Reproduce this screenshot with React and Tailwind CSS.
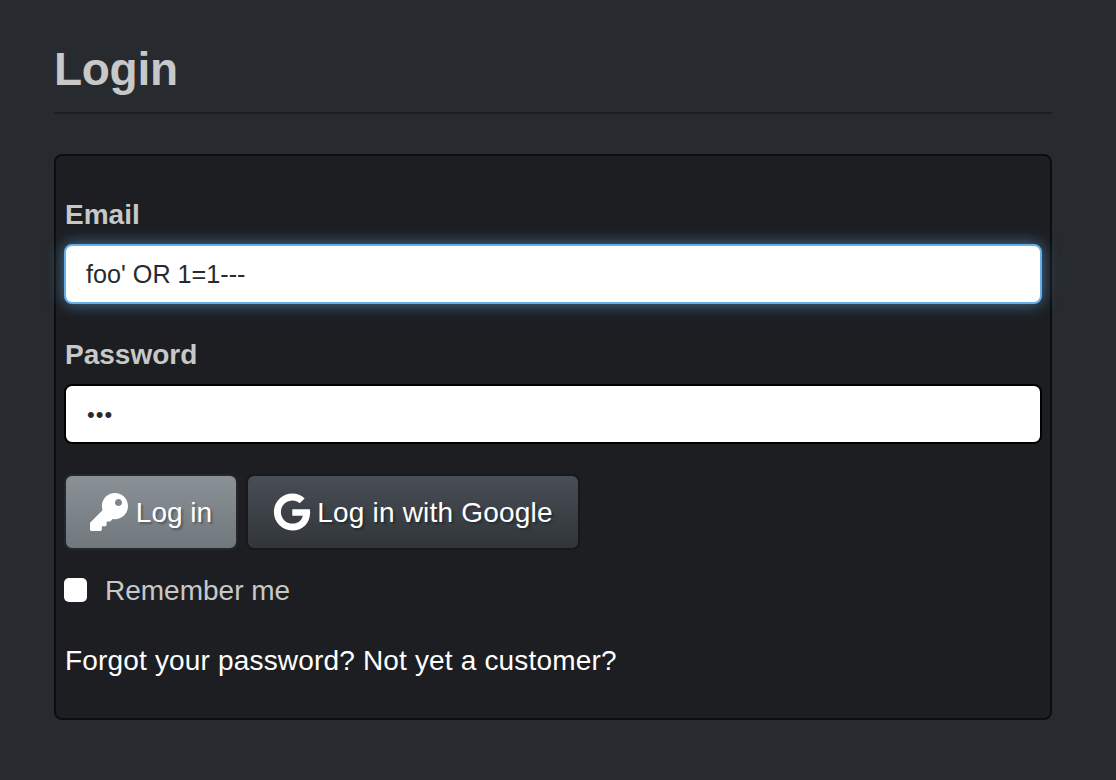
import React from "react";
import { FaKey, FaGoogle } from "react-icons/fa";

export default function App() {
  return (
    <div className="w-[1116px] h-[780px] overflow-hidden bg-[#272b30] px-[54px] pt-[40px] font-['Liberation_Sans',Arial,sans-serif] text-[28px] text-[#c8c8c8]">
      <div className="border-b-2 border-[#1c1e22] h-[74px] w-[998px]">
        <h1 className="text-[46px] leading-[58px] font-bold tracking-[-0.3px] text-[#c8c8c8]">Login</h1>
      </div>
      <div className="mt-[40px] w-[998px] h-[566px] rounded-[8px] border-2 border-[#0c0d0e] bg-[#1c1e22] px-[8px] pt-[43px]">
        <label className="block text-[#c8c8c8] font-bold leading-[32px] mb-[13px] pl-[1px]">Email</label>
        <div className="h-[60px] rounded-[8px] border-2 border-[#66afe9] bg-white pl-[20px] pt-[2px] flex items-center text-[#272b30] text-[25.2px] shadow-[0_0_16px_rgba(102,175,233,0.6)]">
          foo' OR 1=1---
        </div>
        <label className="block text-[#c8c8c8] font-bold leading-[32px] mt-[35px] mb-[13px] pl-[1px]">Password</label>
        <div className="h-[60px] rounded-[8px] border-2 border-black bg-white pl-[21px] flex items-center text-[#272b30] text-[22px] tracking-[1px]">
          •••
        </div>
        <div className="mt-[30px] flex gap-[8px]">
          <button className="h-[76px] w-[174px] rounded-[8px] border-2 border-[#25282b] bg-[linear-gradient(#8a9196,#7a8288_60%,#70787d)] text-white flex items-center justify-center gap-[8px] [text-shadow:2px_2px_2px_rgba(0,0,0,0.3)]">
            <FaKey className="w-[38px] h-[38px]" />
            <span className="pt-[2px]">Log in</span>
          </button>
          <button className="h-[76px] w-[334px] rounded-[8px] border-2 border-[#17191b] bg-[linear-gradient(#484e55,#3a3f44_60%,#313539)] text-white flex items-center justify-center gap-[6px] [text-shadow:2px_2px_2px_rgba(0,0,0,0.3)]">
            <FaGoogle className="w-[38px] h-[38px]" />
            <span className="pt-[2px] tracking-[0.2px]">Log in with Google</span>
          </button>
        </div>
        <div className="mt-[24px] flex items-center gap-[18px] h-[34px]">
          <span className="w-[23px] h-[24px] mb-[3px] rounded-[5px] bg-white" />
          <span className="text-[#c8c8c8]">Remember me</span>
        </div>
        <p className="mt-[36px] leading-[34px] tracking-[0.17px] pl-[1px] text-white">Forgot your password? Not yet a customer?</p>
      </div>
    </div>
  );
}
